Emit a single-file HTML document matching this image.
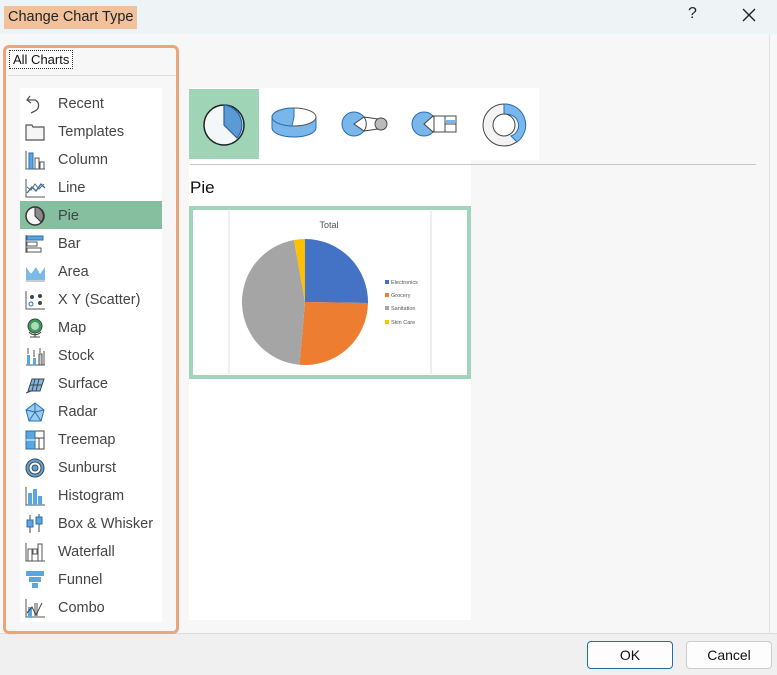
<!DOCTYPE html>
<html><head><meta charset="utf-8"><style>
*{margin:0;padding:0;box-sizing:border-box}
body{width:777px;height:675px;overflow:hidden;background:#f0f0f0;font-family:"Liberation Sans",sans-serif;position:relative}
.abs{position:absolute}
.title{left:0;top:0;width:777px;height:34px;background:#eef3f5}
.tt{left:4px;top:6px;height:23px;padding:3px 4px;background:#f1c19c;font-size:14.5px;color:#222}
.main{left:0;top:34px;width:777px;height:600px;background:#f7f7f7;border-bottom:1px solid #ddd}
.tab{left:9px;top:50px;border:1px dotted #333;font-size:13px;padding:1px 3px;color:#111;background:#fff}
.tabline{left:8px;top:75px;width:168px;height:1px;background:#ddd}
.orange{left:3px;top:45px;width:176px;height:589px;border:3px solid #e9a67a;border-radius:6px}
.list{left:20px;top:88px;width:142px;height:534px;background:#fff}
.item{position:absolute;left:0;width:142px;height:28px;font-size:14.5px;color:#444;line-height:28px}
.item span{position:absolute;left:38px;top:1px}
.item svg{position:absolute;left:4px;top:4px}
.sel{background:#86bfa0}
.right{left:189px;top:88px;width:282px;height:532px;background:#fff}
.gallery{left:189px;top:88px;width:350px;height:72px;background:#fff}
.selg{left:189px;top:89px;width:70px;height:70px;background:#9fd4b7}
.div{left:190px;top:164px;width:566px;height:1px;background:#c8c8c8}
.btn{top:641px;height:28px;width:86px;background:#fdfdfd;border:1px solid #ccc;border-radius:4px;font-size:14px;text-align:center;line-height:26px;color:#111}
</style></head><body>
<div class="abs title"></div>
<div class="abs tt">Change Chart Type</div>
<div class="abs" style="left:688px;top:5px;font-size:16px;color:#222">?</div>
<svg class="abs" style="left:742px;top:8px" width="14" height="14"><path d="M1 1L13 13M13 1L1 13" stroke="#222" stroke-width="1.4"/></svg>
<div class="abs main"></div>
<div class="abs tabline"></div>
<div class="abs tab">All Charts</div>
<div class="abs list">
<div class="item" style="top:1px"><svg width="22" height="22"><path d="M6 3L3 7L7 10M3 7H11a6 6 0 0 1 0 11L7 20" fill="none" stroke="#555" stroke-width="1.3"/></svg><span>Recent</span></div>
<div class="item" style="top:29px"><svg width="22" height="22"><path d="M2 4h6l1 2h11v13H2z" fill="#f5f5f5" stroke="#555" stroke-width="1.2"/></svg><span>Templates</span></div>
<div class="item" style="top:57px"><svg width="22" height="22"><path d="M2 2v18h19" fill="none" stroke="#555"/><rect x="5" y="4" width="4" height="16" fill="#5aa6e0" stroke="#2a6fb0"/><rect x="11" y="9" width="4" height="11" fill="#fff" stroke="#555"/><rect x="16" y="13" width="4" height="7" fill="#fff" stroke="#555"/></svg><span>Column</span></div>
<div class="item" style="top:85px"><svg width="22" height="22"><path d="M2 2v18h19" fill="none" stroke="#555"/><path d="M3 16l5-6 4 4 5-7 4 4" fill="none" stroke="#2a6fb0" stroke-width="1.3"/><path d="M3 10l4 3 4-6 4 5 5-5" fill="none" stroke="#666"/></svg><span>Line</span></div>
<div class="item sel" style="top:113px"><svg width="22" height="22"><circle cx="11" cy="11" r="9" fill="#f5f5f5" stroke="#333" stroke-width="1.5"/><path d="M11 11V2a9 9 0 0 1 6 15z" fill="#8a8a8a" stroke="#333"/></svg><span>Pie</span></div>
<div class="item" style="top:141px"><svg width="22" height="22"><path d="M2 2v18" stroke="#555"/><rect x="3" y="3" width="16" height="4" fill="#5aa6e0" stroke="#2a6fb0"/><rect x="3" y="9" width="10" height="4" fill="#fff" stroke="#555"/><rect x="3" y="15" width="14" height="4" fill="#fff" stroke="#555"/></svg><span>Bar</span></div>
<div class="item" style="top:169px"><svg width="22" height="22"><path d="M2 6l5 7 5-7 4 7 5-7v13H2z" fill="#7bb9e8"/><path d="M2 20h19" stroke="#999"/></svg><span>Area</span></div>
<div class="item" style="top:197px"><svg width="22" height="22"><path d="M2 2v18h19" fill="none" stroke="#555"/><circle cx="7" cy="15" r="2" fill="#fff" stroke="#2a6fb0"/><circle cx="8" cy="8" r="2" fill="#444"/><circle cx="16" cy="7" r="2" fill="#444"/><circle cx="16" cy="14" r="2" fill="#444"/></svg><span>X Y (Scatter)</span></div>
<div class="item" style="top:225px"><svg width="22" height="22"><circle cx="11" cy="9" r="7" fill="#3a9a5a" stroke="#444"/><circle cx="11" cy="9" r="4" fill="#fff" opacity=".6"/><path d="M5 15a8 8 0 0 0 12 0M11 16v4M6 20h10" fill="none" stroke="#444"/></svg><span>Map</span></div>
<div class="item" style="top:253px"><svg width="22" height="22"><path d="M2 20h19" stroke="#555"/><rect x="3" y="10" width="3" height="10" fill="#5aa6e0"/><rect x="9" y="13" width="3" height="7" fill="#5aa6e0"/><rect x="15" y="9" width="3" height="11" fill="#ccc" stroke="#555"/><path d="M4 3v6M10 5v7M16 3v5M20 6v14" stroke="#555"/></svg><span>Stock</span></div>
<div class="item" style="top:281px"><svg width="22" height="22"><path d="M4 18l4-12h12l-4 12z" fill="#7bb9e8" stroke="#444"/><path d="M6 12h12M11 6l-3 12M15 6l-3 12M2 20l5-2" stroke="#444" fill="none"/></svg><span>Surface</span></div>
<div class="item" style="top:309px"><svg width="22" height="22"><path d="M11 2l9 7-3 11H5L2 9z" fill="#9ccdf0" stroke="#2a6fb0"/><path d="M11 2v9M2 9l9 2 9-2M5 20l6-9 6 9" stroke="#2a6fb0" fill="none"/></svg><span>Radar</span></div>
<div class="item" style="top:337px"><svg width="22" height="22"><rect x="2" y="2" width="18" height="18" fill="#fff" stroke="#444"/><rect x="2" y="2" width="9" height="18" fill="#5aa6e0" stroke="#2a6fb0"/><path d="M11 9h9M15 9v11" stroke="#444"/><path d="M2 11h9" stroke="#fff"/></svg><span>Treemap</span></div>
<div class="item" style="top:365px"><svg width="22" height="22"><circle cx="11" cy="11" r="9" fill="#5aa6e0" stroke="#444"/><circle cx="11" cy="11" r="6" fill="#fff" stroke="#444"/><circle cx="11" cy="11" r="3" fill="#5aa6e0" stroke="#444"/></svg><span>Sunburst</span></div>
<div class="item" style="top:393px"><svg width="22" height="22"><path d="M2 2v18h19" fill="none" stroke="#555"/><rect x="4" y="8" width="4" height="12" fill="#5aa6e0"/><rect x="9" y="4" width="4" height="16" fill="#5aa6e0"/><rect x="14" y="11" width="4" height="9" fill="#5aa6e0"/></svg><span>Histogram</span></div>
<div class="item" style="top:421px"><svg width="22" height="22"><path d="M6 2v18M15 1v18" stroke="#444"/><rect x="3" y="7" width="6" height="7" fill="#5aa6e0" stroke="#2a6fb0"/><rect x="12" y="4" width="6" height="7" fill="#5aa6e0" stroke="#2a6fb0"/></svg><span>Box &amp; Whisker</span></div>
<div class="item" style="top:449px"><svg width="22" height="22"><path d="M2 2v18h19" fill="none" stroke="#555"/><rect x="4" y="8" width="4" height="12" fill="#fff" stroke="#555"/><rect x="9" y="8" width="4" height="5" fill="#fff" stroke="#555"/><rect x="14" y="3" width="4" height="17" fill="#fff" stroke="#555"/></svg><span>Waterfall</span></div>
<div class="item" style="top:477px"><svg width="22" height="22"><rect x="2" y="2" width="18" height="5" fill="#5aa6e0"/><rect x="5" y="8" width="12" height="5" fill="#5aa6e0"/><rect x="8" y="14" width="6" height="5" fill="#5aa6e0"/></svg><span>Funnel</span></div>
<div class="item" style="top:505px"><svg width="22" height="22"><path d="M2 2v18h19" fill="none" stroke="#555"/><rect x="4" y="10" width="4" height="10" fill="#5aa6e0"/><rect x="10" y="6" width="4" height="14" fill="#aaa"/><path d="M3 16l5-6 4 8 6-12" fill="none" stroke="#444"/></svg><span>Combo</span></div>
</div>
<div class="abs orange"></div>
<div class="abs right"></div>
<div class="abs gallery"></div>
<div class="abs selg"></div>
<svg class="abs" style="left:189px;top:88px" width="360" height="72">
<circle cx="35" cy="37" r="20" fill="#f3f7f7" stroke="#222" stroke-width="1.5"/>
<path d="M35 37V17a20 20 0 0 1 13 33z" fill="#5b9bd5" stroke="#2a5fa8" stroke-width="1.2"/>
<path d="M83 29v11a22 9 0 0 0 44 0V29" fill="#79b6ea" stroke="#2a6fb0"/>
<ellipse cx="105" cy="29" rx="22" ry="9" fill="#fff" stroke="#555"/>
<path d="M105 29V20a22 9 0 0 0-22 9a22 9 0 0 0 20 9z" fill="#79b6ea" stroke="#2a6fb0"/>
<circle cx="165" cy="36" r="12" fill="#79b6ea" stroke="#2a6fb0"/><path d="M165 36l10-7a12 12 0 0 1 0 14z" fill="#fff" stroke="#444"/>
<path d="M175 29l14 2M175 43l14-2" stroke="#444"/><circle cx="192" cy="36" r="6" fill="#bbb" stroke="#444"/>
<circle cx="235" cy="36" r="12" fill="#79b6ea" stroke="#2a6fb0"/><path d="M235 36l9-8a12 12 0 0 1 0 16z" fill="#fff" stroke="#444"/>
<rect x="245" y="28" width="22" height="16" fill="#fff" stroke="#444"/><path d="M256 28v16M256 36h11" stroke="#444"/><rect x="257" y="32" width="9" height="3" fill="#79b6ea"/>
<circle cx="315" cy="37" r="21" fill="#f3f3f3" stroke="#444"/>
<path d="M315 16a21 21 0 0 1 13 38l-6-6a11 11 0 0 0-7-21z" fill="#79b6ea" stroke="#2a6fb0"/>
<circle cx="315" cy="37" r="11" fill="#fff" stroke="#444"/>
</svg>
<div class="abs div"></div>
<div class="abs" style="left:190px;top:178px;font-size:17px;color:#111">Pie</div>
<svg class="abs" style="left:189px;top:206px" width="282" height="173">
<rect x="2" y="2" width="278" height="169" fill="#fff" stroke="#a2d3bb" stroke-width="4"/>
<path d="M40 5v163M242 5v163" stroke="#ddd"/>
<text x="140" y="22" font-size="9" text-anchor="middle" fill="#555" font-family="Liberation Sans">Total</text>
<path d="M116 96V33A63 63 0 0 1 179 97z" fill="#4472c4"/>
<path d="M116 96L179 97A63 63 0 0 1 110.5 158.8z" fill="#ed7d31"/>
<path d="M116 96L110.5 158.8A63 63 0 0 1 105 34z" fill="#a5a5a5"/>
<path d="M116 96L105 34A63 63 0 0 1 116 33z" fill="#ffc000"/>
<g font-size="5.5" fill="#555" font-family="Liberation Sans">
<rect x="196" y="74" width="4" height="4" fill="#4472c4"/><text x="202" y="78">Electronics</text>
<rect x="196" y="87" width="4" height="4" fill="#ed7d31"/><text x="202" y="91">Grocery</text>
<rect x="196" y="100" width="4" height="4" fill="#a5a5a5"/><text x="202" y="104">Sanitation</text>
<rect x="196" y="114" width="4" height="4" fill="#ffc000"/><text x="202" y="118">Skin Care</text>
</g></svg>
<div class="abs" style="left:769px;top:34px;width:1px;height:600px;background:#e3e3e3"></div>
<div class="abs btn" style="left:587px;border:1px solid #1a6fa8">OK</div>
<div class="abs btn" style="left:686px">Cancel</div>
</body></html>
